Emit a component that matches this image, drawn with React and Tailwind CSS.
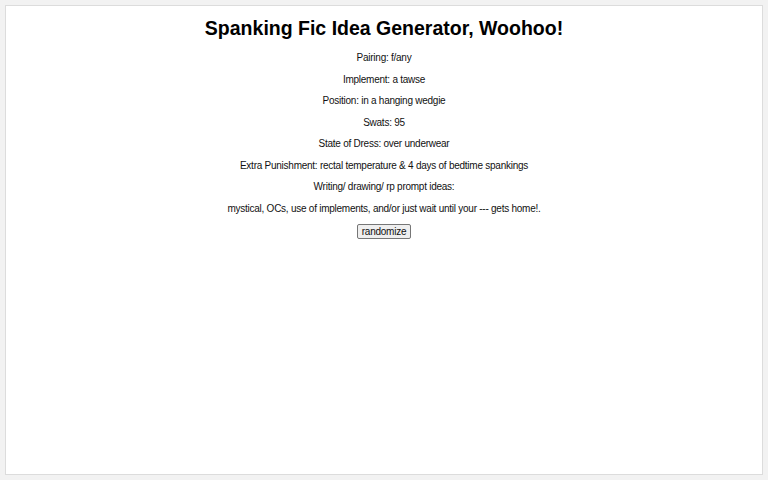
import { useState } from 'react'

const lines = [
  'Pairing: f/any',
  'Implement: a tawse',
  'Position: in a hanging wedgie',
  'Swats: 95',
  'State of Dress: over underwear',
  'Extra Punishment: rectal temperature & 4 days of bedtime spankings',
  'Writing/ drawing/ rp prompt ideas:',
  'mystical, OCs, use of implements, and/or just wait until your --- gets home!.',
]

function App() {
  const [items] = useState(lines)

  return (
    <div className="min-h-screen bg-[#f2f2f2] p-[5px]" style={{ fontFamily: '"Liberation Sans", Arial, sans-serif' }}>
      <div className="h-[470px] bg-white border border-[#dcdcdc] flex flex-col items-center text-[#111]">
        <h1 className="mt-[10px] text-[19.5px] leading-[24px] font-bold text-black">Spanking Fic Idea Generator, Woohoo!</h1>
        <div className="mt-[7px] flex flex-col items-center text-[10px] tracking-[-0.25px]">
          {items.map(line => (
            <p key={line} className="leading-[21.5px]">{line}</p>
          ))}
        </div>
        <button className="mt-[5px] h-[15px] w-[54px] text-[10px] tracking-[-0.25px] leading-[13px] bg-[#efefef] border border-[#767676] rounded-[2px]">
          randomize
        </button>
      </div>
    </div>
  )
}

export default App
